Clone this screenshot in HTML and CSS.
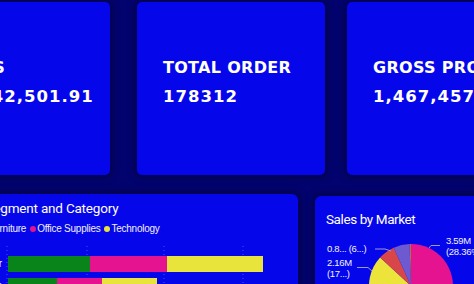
FILE: index.html
```html
<!DOCTYPE html>
<html lang="en">
<head>
<meta charset="utf-8">
<title>Sales Dashboard</title>
<link rel="stylesheet" href="styles.css">
</head>
<body>
<div class="dash">
  <div class="kpis">
    <div class="kpi kpi-first">
      <div class="kpi-title">SALES</div>
      <div class="kpi-value">12,642,501.91</div>
    </div>
    <div class="kpi">
      <div class="kpi-title">TOTAL ORDER</div>
      <div class="kpi-value">178312</div>
    </div>
    <div class="kpi kpi-last">
      <div class="kpi-title">GROSS PROFIT</div>
      <div class="kpi-value">1,467,457.29</div>
    </div>
  </div>
  <div class="charts">
    <div class="panel panel-bar">
      <div class="panel-title">Sales by Segment and Category</div>
      <div class="legend">
        <span class="legend-title">Category</span>
        <span class="legend-item"><i class="dot dot-green"></i>Furniture</span>
        <span class="legend-item"><i class="dot dot-pink"></i>Office Supplies</span>
        <span class="legend-item"><i class="dot dot-yellow"></i>Technology</span>
      </div>
      <svg class="bar-plot" viewBox="-78 0 376 60" width="376" height="60">
        <g class="grid">
          <line x1="7" y1="11" x2="7" y2="60"/>
          <line x1="87" y1="11" x2="87" y2="60"/>
          <line x1="164" y1="11" x2="164" y2="60"/>
          <line x1="243" y1="11" x2="243" y2="60"/>
        </g>
        <text class="axis" x="2" y="32" text-anchor="end">Consumer</text>
        <text class="axis" x="2" y="54" text-anchor="end">Corporate</text>
        <rect x="8" y="21" width="82" height="16" fill="#08841a"/>
        <rect x="90" y="21" width="77" height="16" fill="#e5138f"/>
        <rect x="167" y="21" width="96" height="16" fill="#e9e43c"/>
        <rect x="8" y="43" width="49" height="16" fill="#08841a"/>
        <rect x="57" y="43" width="45" height="16" fill="#e5138f"/>
        <rect x="102" y="43" width="55" height="16" fill="#e9e43c"/>
      </svg>
    </div>
    <div class="panel panel-pie">
      <div class="panel-title">Sales by Market</div>
      <svg class="pie-plot" viewBox="0 0 200 60" width="200" height="60">
        <path d="M96 58 L96 16 A42 42 0 0 1 137.07 66.80 Z" fill="#e5138f"/>
        <path d="M96 58 L137.07 66.80 A42 42 0 0 1 91.90 99.80 Z" fill="#2f6fd8"/>
        <path d="M96 58 L91.90 99.80 A42 42 0 0 1 56.26 71.60 Z" fill="#7a2fb0"/>
        <path d="M96 58 L56.26 71.60 A42 42 0 0 1 65.13 29.52 Z" fill="#ece43a"/>
        <path d="M96 58 L65.13 29.52 A42 42 0 0 1 78.72 19.72 Z" fill="#d9464a"/>
        <path d="M96 58 L78.72 19.72 A42 42 0 0 1 94.53 16.03 Z" fill="#6d5ad0"/>
        <path d="M96 58 L94.53 16.03 A42 42 0 0 1 96 16 Z" fill="#a8705a"/>
        <g class="leader">
          <polyline points="114,20 116,17.5 125,17.5"/>
          <polyline points="60,21 70,21 76,23"/>
          <polyline points="42,39.5 53,39.5 57,43"/>
        </g>
        <text class="lbl" x="131" y="16">3.59M</text>
        <text class="lbl" x="131" y="27">(28.36%)</text>
        <text class="lbl" x="12" y="24">0.8... (6...)</text>
        <text class="lbl" x="12" y="38">2.16M</text>
        <text class="lbl" x="12" y="49">(17...)</text>
      </svg>
    </div>
  </div>
</div>
</body>
</html>
```
FILE: styles.css
```css
html, body {
  margin: 0;
  padding: 0;
}
body {
  width: 474px;
  height: 284px;
  overflow: hidden;
  background: #03036f;
  font-family: "Liberation Sans", Arial, sans-serif;
  color: #ffffff;
}
.dash {
  width: 474px;
  height: 284px;
  overflow: hidden;
}
.kpis {
  display: flex;
  gap: 24px;
  margin-left: -77px;
  padding-top: 2px;
}
.kpi {
  flex: 0 0 188px;
  height: 173px;
  box-sizing: border-box;
  padding: 58px 0 0 26px;
  background: #0606ea;
  border-radius: 5px;
  box-shadow: 0 0 7px 2px rgba(0, 0, 40, 0.55);
  white-space: nowrap;
  font-family: "DejaVu Sans", Verdana, sans-serif;
  font-weight: bold;
}
.kpi-first {
  flex-basis: 187px;
  margin-right: 3px;
  padding-left: 24px;
}
.kpi-last {
  margin-left: -2px;
}
.kpi-title {
  font-size: 16px;
  line-height: 16px;
  letter-spacing: 0.3px;
}
.kpi-value {
  margin-top: 11px;
  font-size: 16.5px;
  line-height: 19px;
  letter-spacing: 1px;
}
.charts {
  display: flex;
  gap: 17px;
  margin-left: -78px;
  margin-top: 19px;
  align-items: flex-start;
}
.panel {
  background: #0606ea;
  border-radius: 6px;
  box-shadow: 0 0 7px 2px rgba(0, 0, 40, 0.55);
  height: 140px;
  box-sizing: border-box;
  white-space: nowrap;
}
.panel-bar {
  flex: 0 0 376px;
  padding-top: 5px;
}
.panel-pie {
  flex: 0 0 200px;
  margin-top: 2px;
  padding-top: 14px;
}
.panel-title {
  font-family: Roboto, "Noto Sans", sans-serif;
  font-size: 13.5px;
  line-height: 18px;
  letter-spacing: -0.2px;
  padding-left: 12px;
  color: #ffffff;
}
.panel-pie .panel-title {
  padding-left: 11px;
  letter-spacing: -0.4px;
}
.legend {
  display: flex;
  align-items: center;
  gap: 4px;
  margin-top: 6px;
  padding-left: 12px;
  font-size: 10px;
  line-height: 12px;
  letter-spacing: -0.25px;
  color: #f0f0ff;
}
.legend-title {
  font-weight: bold;
  margin-right: 2px;
}
.legend-item {
  display: flex;
  align-items: center;
  gap: 1px;
}
.dot {
  display: inline-block;
  width: 6px;
  height: 6px;
  border-radius: 50%;
}
.dot-green { background: #08841a; }
.dot-pink { background: #e5138f; }
.dot-yellow { background: #e9e43c; }
.bar-plot,
.pie-plot {
  display: block;
}
.grid line {
  stroke: rgba(170, 170, 255, 0.45);
  stroke-width: 1;
  stroke-dasharray: 1 3;
}
.axis {
  font-family: "Liberation Sans", Arial, sans-serif;
  font-size: 10px;
  fill: #ffffff;
}
.leader polyline {
  fill: none;
  stroke: #9a9ad8;
  stroke-width: 1;
}
.lbl {
  font-family: "Liberation Sans", Arial, sans-serif;
  font-size: 9.5px;
  letter-spacing: -0.3px;
  fill: #f2f2ff;
}
```
